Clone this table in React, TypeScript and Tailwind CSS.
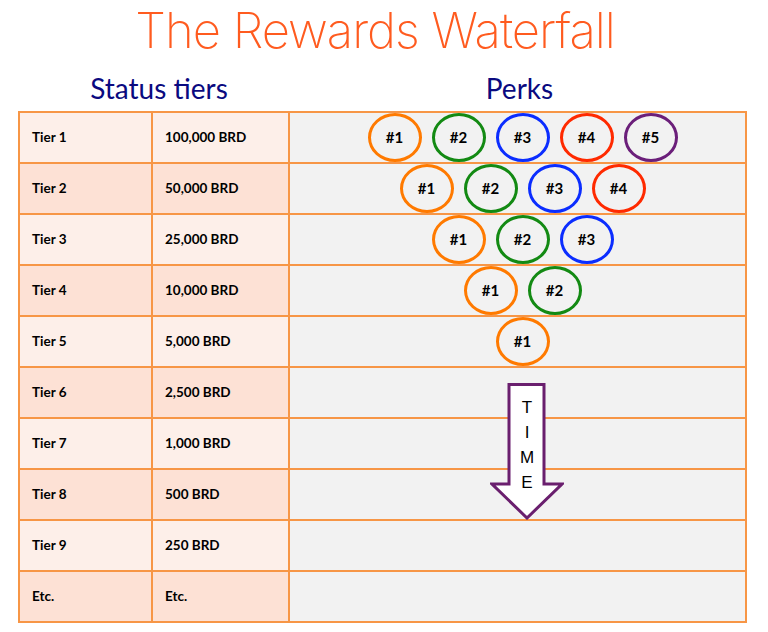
const tiers = [
  ['Tier 1', '100,000 BRD'],
  ['Tier 2', '50,000 BRD'],
  ['Tier 3', '25,000 BRD'],
  ['Tier 4', '10,000 BRD'],
  ['Tier 5', '5,000 BRD'],
  ['Tier 6', '2,500 BRD'],
  ['Tier 7', '1,000 BRD'],
  ['Tier 8', '500 BRD'],
  ['Tier 9', '250 BRD'],
  ['Etc.', 'Etc.'],
]

const perkColors = [
  'border-[#ff7a00]',
  'border-[#138a13]',
  'border-[#0b2dff]',
  'border-[#ff2a00]',
  'border-[#6b1f7a]',
]

function Perk({ n }: { n: number }) {
  return (
    <div
      className={`w-[54px] h-[49px] rounded-[50%] border-[3px] ${perkColors[n - 1]} flex items-center justify-center text-[15px] font-bold text-black`}
    >
      #{n}
    </div>
  )
}

function TimeArrow() {
  return (
    <div className="absolute left-[198px] top-[270px] w-[74px] h-[137px]">
      <svg width="74" height="137" viewBox="0 0 74 137" className="absolute inset-0">
        <path
          d="M19 1.5 H54 V101 H72 L37 135 L2 101 H19 Z"
          fill="white"
          stroke="#6a1f6e"
          strokeWidth="3"
          strokeLinejoin="miter"
        />
      </svg>
      <div className="absolute left-0 right-0 top-[12px] flex flex-col items-center text-[17px] leading-[25px] text-black font-['Liberation_Sans',sans-serif]">
        <span>T</span>
        <span>I</span>
        <span>M</span>
        <span>E</span>
      </div>
    </div>
  )
}

export default function App() {
  return (
    <div className="w-[768px] h-[632px] bg-white overflow-hidden font-['Lato',sans-serif]">
      <h1 className="h-[66px] pt-[2px] pr-[18px] text-center text-[49px] leading-[58px] font-extralight tracking-[-1px] text-[#ff5b1f] font-['DejaVu_Sans_ExtraLight','Inter',sans-serif]">
        The Rewards Waterfall
      </h1>
      <div className="flex ml-[18px] w-[729px] h-[45px] text-[28px] leading-[45px] text-[#0a0a80]">
        <div className="w-[274px] text-center pl-[8px]">Status tiers</div>
        <div className="flex-1 text-center">Perks</div>
      </div>
      <div className="relative ml-[18px] w-[729px] border-2 border-[#f79646]">
        {tiers.map(([tier, amount], i) => {
          const shade = i % 2 === 0 ? 'bg-[#fdefe9]' : 'bg-[#fde1d5]'
          const count = 5 - i
          const last = i === tiers.length - 1
          return (
            <div
              key={tier + i}
              className={`flex ${last ? 'h-[49px]' : 'h-[51px] border-b-2 border-[#f79646]'}`}
            >
              <div className={`w-[133px] ${shade} border-r-2 border-[#f79646] flex items-center pl-[12px] text-[13.5px] font-bold text-black`}>
                {tier}
              </div>
              <div className={`w-[137px] ${shade} border-r-2 border-[#f79646] flex items-center pl-[12px] text-[13.5px] font-bold text-black`}>
                {amount}
              </div>
              <div className="flex-1 bg-[#f2f2f2] flex items-center justify-center gap-[10px] pl-[10px]">
                {count > 0 && Array.from({ length: count }, (_, k) => <Perk key={k} n={k + 1} />)}
              </div>
            </div>
          )
        })}
        <div className="absolute left-[272px] top-0">
          <TimeArrow />
        </div>
      </div>
    </div>
  )
}
